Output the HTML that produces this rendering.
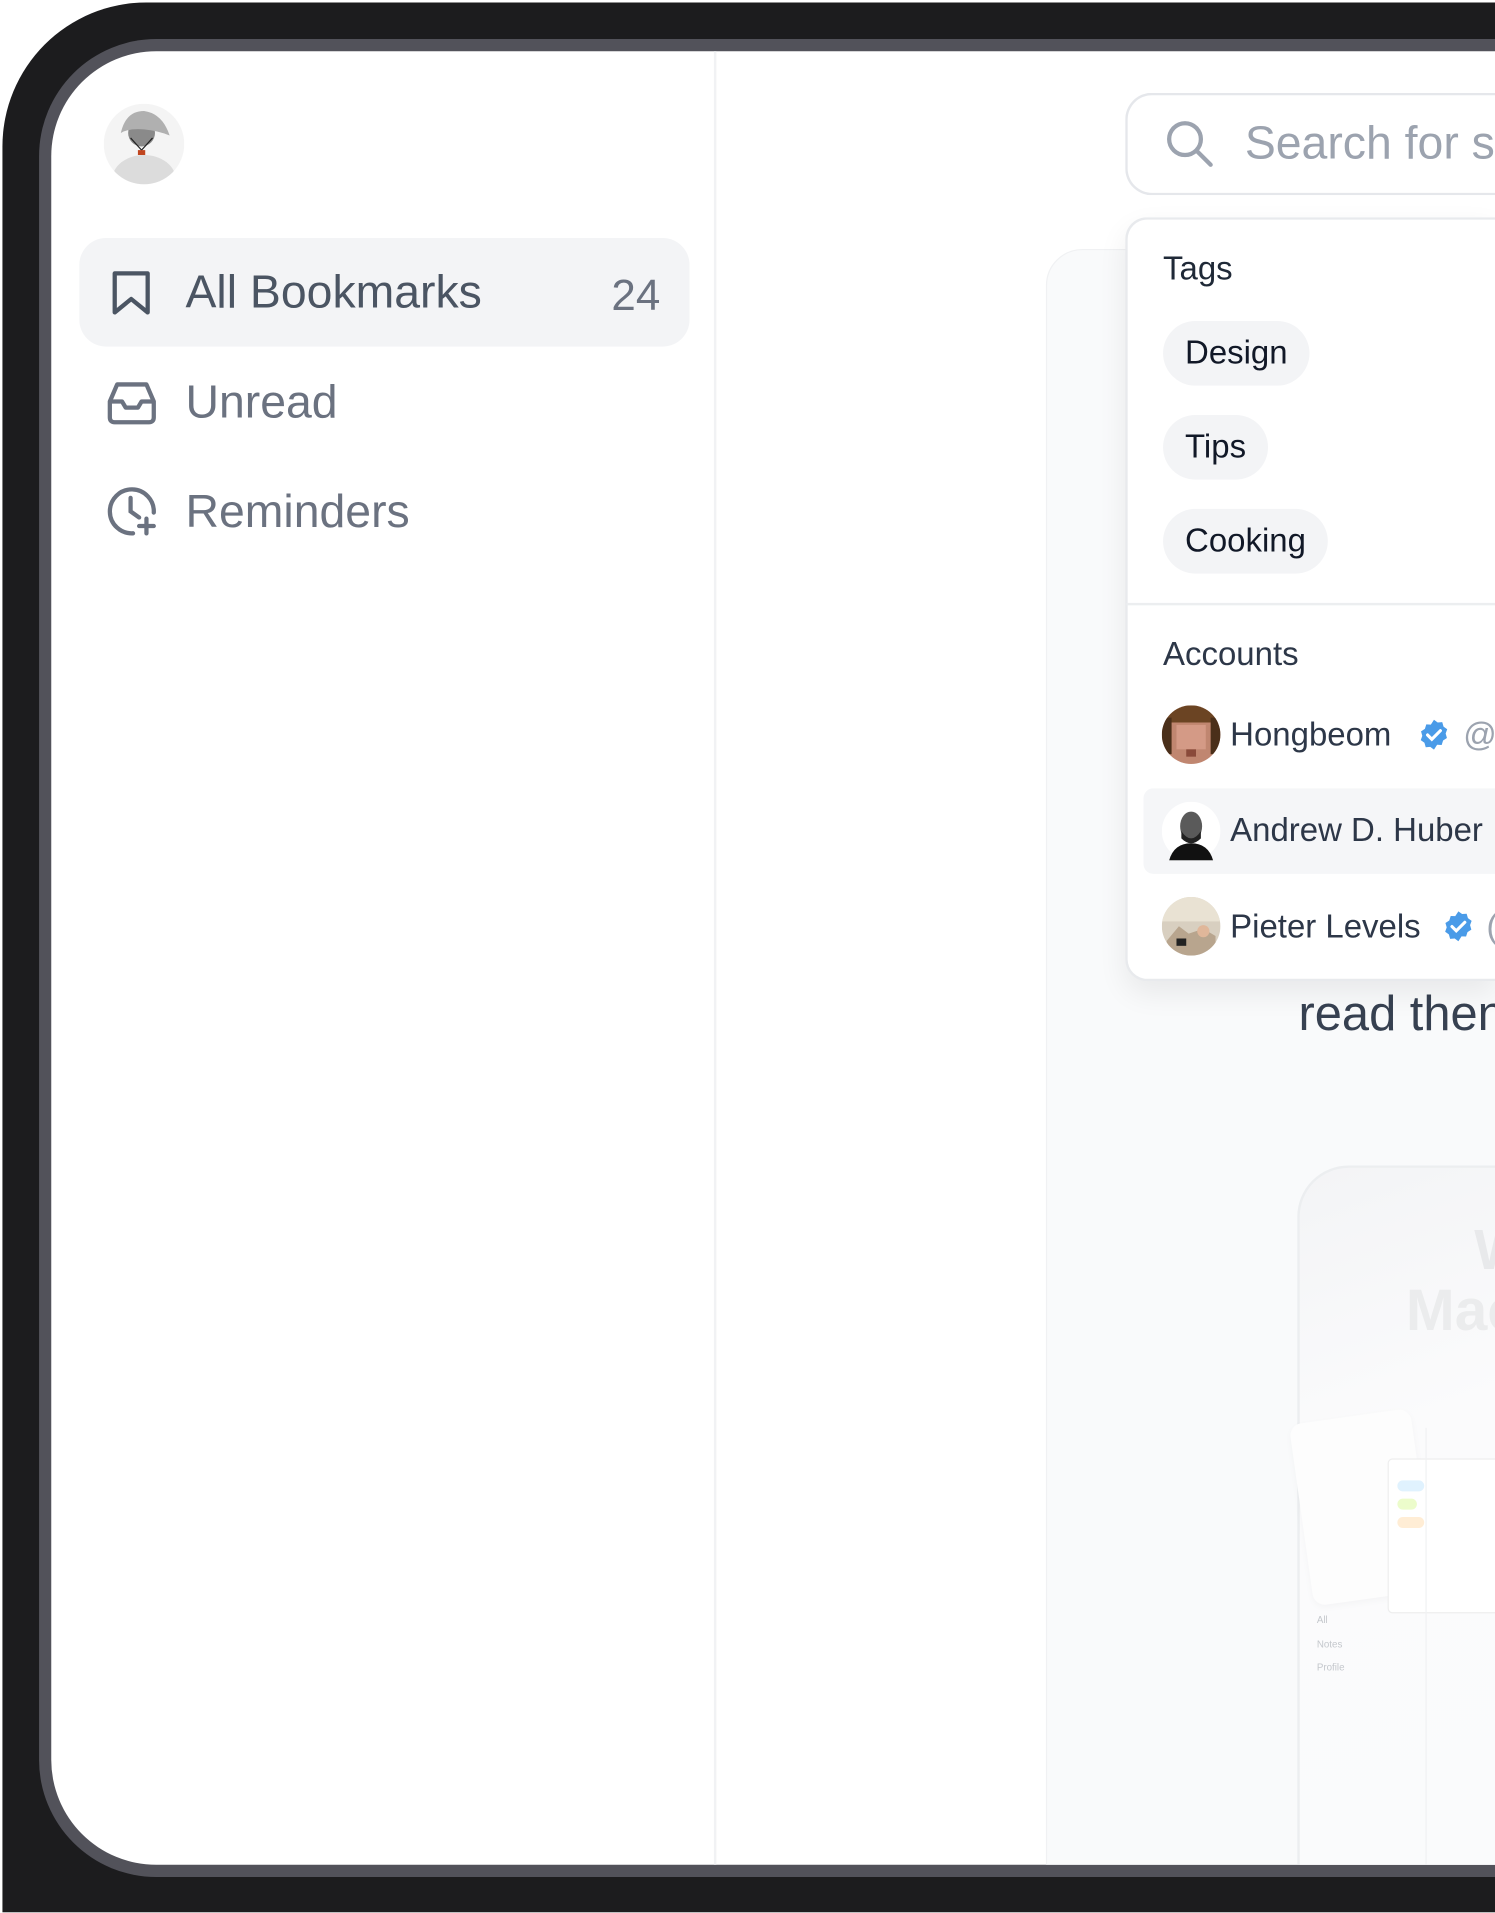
<!DOCTYPE html>
<html><head><meta charset="utf-8"><style>
html,body{margin:0;padding:0;width:1495px;height:1913px;overflow:hidden;background:#fff;font-family:"Liberation Sans",sans-serif}
#w{position:absolute;left:0;top:0;width:1225px;height:1567px;transform:scale(1.22041);transform-origin:0 0;overflow:hidden}
.a{position:absolute}
.pill{position:absolute;left:953px;height:53px;border-radius:27px;background:#f3f4f6;color:#111827;font-size:27px;line-height:53px;padding:0 18px;box-sizing:border-box}
.nm{position:absolute;left:1008px;font-size:27px;color:#2d3748;white-space:nowrap}
.badge{position:absolute;width:28px;height:28px}
</style></head><body><div id="w">
<div class="a" style="left:2px;top:2px;width:1223px;height:1565px;background:#1c1c1e;border-radius:118px 0 0 0"></div>
<div class="a" style="left:32px;top:32px;width:1193px;height:1506px;background:#52525a;border-radius:96px 0 0 96px"></div>
<div class="a" style="left:42px;top:42px;width:1183px;height:1486px;background:#fff;border-radius:86px 0 0 86px;overflow:hidden">
 <div class="a" style="left:815px;top:162px;width:500px;height:1400px;background:#f9fafb;border:1px solid #f0f1f3;border-radius:30px"></div>
 <div class="a" style="left:1022px;top:767px;font-size:40px;color:#374151;white-space:nowrap">read then</div>
 <div class="a" style="left:1021px;top:913px;width:300px;height:700px;border:2px solid #eceef0;border-radius:42px;background:linear-gradient(160deg,#f3f4f6 0%,#fbfbfc 30%,#fafbfc 100%)"></div>
 <div class="a" style="left:1166px;top:955px;font-size:46px;font-weight:bold;color:#e8e9eb">W</div>
 <div class="a" style="left:1110px;top:1005px;font-size:48px;font-weight:bold;color:#ebeced">Mac</div>
 <div class="a" style="left:1024px;top:1118px;width:100px;height:150px;background:#fdfdfd;transform:rotate(-8deg);border-radius:10px;box-shadow:0 2px 6px rgba(0,0,0,.03)"></div>
 <div class="a" style="left:1095px;top:1153px;width:100px;height:125px;background:#fff;border:1px solid #eee;border-radius:4px"></div>
 <div class="a" style="left:1103px;top:1171px;width:22px;height:9px;background:#e0f2fe;border-radius:5px"></div>
 <div class="a" style="left:1103px;top:1186px;width:16px;height:9px;background:#ecfccb;border-radius:5px"></div>
 <div class="a" style="left:1103px;top:1201px;width:22px;height:9px;background:#ffedd5;border-radius:5px"></div>
 <div class="a" style="left:1037px;top:1281px;font-size:8px;color:#c4c7cc">All</div>
 <div class="a" style="left:1037px;top:1301px;font-size:8px;color:#c4c7cc">Notes</div>
 <div class="a" style="left:1037px;top:1320px;font-size:8px;color:#c4c7cc">Profile</div>
 <div class="a" style="left:1126px;top:1128px;width:1px;height:358px;background:#f0f1f3"></div>
</div>
<div class="a" style="left:585px;top:42px;width:2px;height:1486px;background:#f1f2f4"></div>

<svg class="a" style="left:85px;top:85px" width="66" height="66" viewBox="0 0 66 66">
<defs><clipPath id="c0"><circle cx="33" cy="33" r="33"/></clipPath></defs>
<g clip-path="url(#c0)">
<rect width="66" height="66" fill="#f4f4f4"/>
<ellipse cx="33" cy="62" rx="26" ry="20" fill="#dcdcdc"/>
<circle cx="31" cy="24" r="11" fill="#8a8a8a"/>
<path d="M14 24 Q18 6 33 6 Q48 8 54 26 Q44 22 33 21 Q20 20 14 24Z" fill="#b0b0b0"/>
<path d="M22 28 L31 38 L40 28" stroke="#222" stroke-width="1" fill="none"/>
<rect x="28" y="38" width="6" height="4" fill="#c0451e"/>
</g>
</svg>

<div class="a" style="left:65px;top:195px;width:500px;height:89px;background:#f3f4f6;border-radius:22px"></div>
<svg class="a" style="left:90px;top:220px" width="36" height="40" viewBox="0 0 36 40" fill="none" stroke="#4b5563" stroke-width="3.5" stroke-linejoin="round"><path d="M4 4 H31 V36 L17.5 25 L4 36Z"/></svg>
<div class="a" style="left:152px;top:219px;font-size:38px;color:#4b5563">All Bookmarks</div>
<div class="a" style="left:501px;top:221px;font-size:36px;color:#6b7280">24</div>

<svg class="a" style="left:87px;top:311px" width="42" height="38" viewBox="0 0 42 38" fill="none" stroke="#6b7280" stroke-width="3.5" stroke-linejoin="round"><path d="M3 18 L9 4 H33 L39 18 V31 Q39 35 35 35 H7 Q3 35 3 31Z"/><path d="M3 18 H13 L16 23 H26 L29 18 H39"/></svg>
<div class="a" style="left:152px;top:309px;font-size:38px;color:#6b7280">Unread</div>

<svg class="a" style="left:87px;top:397px" width="44" height="44" viewBox="0 0 44 44" fill="none" stroke="#6b7280" stroke-width="3.5" stroke-linecap="round"><path d="M22 40 A18 18 0 1 1 39 23"/><path d="M20 11 V22 L27 27"/><path d="M33 28 V40 M27 34 H39"/></svg>
<div class="a" style="left:152px;top:399px;font-size:38px;color:#6b7280">Reminders</div>

<div class="a" style="left:922px;top:76px;width:303px;height:84px;box-sizing:border-box;border:2px solid #e5e7eb;border-right:none;border-radius:22px 0 0 22px;background:#fff"></div>
<svg class="a" style="left:955px;top:98px" width="40" height="40" viewBox="0 0 40 40" fill="none" stroke="#9ca3af" stroke-width="3.5" stroke-linecap="round"><circle cx="16" cy="16" r="13"/><path d="M26 26 L37 37"/></svg>
<div class="a" style="left:1020px;top:97px;font-size:38px;color:#9ca3af;white-space:nowrap">Search for s</div>

<div class="a" style="left:922px;top:178px;width:303px;height:626px;box-sizing:border-box;border:2px solid #e8eaed;border-right:none;border-radius:18px 0 0 18px;background:#fff;box-shadow:0 10px 24px rgba(0,0,0,.07)"></div>
<div class="a" style="left:953px;top:205px;font-size:27px;color:#1f2937">Tags</div>
<div class="pill" style="top:263px">Design</div>
<div class="pill" style="top:340px">Tips</div>
<div class="pill" style="top:417px">Cooking</div>
<div class="a" style="left:923px;top:494px;width:302px;height:2px;background:#eceef0"></div>
<div class="a" style="left:953px;top:521px;font-size:27px;color:#2d3748">Accounts</div>

<svg class="a" style="left:952px;top:578px" width="48" height="48" viewBox="0 0 48 48"><defs><clipPath id="c1"><circle cx="24" cy="24" r="24"/></clipPath></defs><g clip-path="url(#c1)"><rect width="48" height="48" fill="#c08670"/><rect width="48" height="14" fill="#6b4423"/><rect x="0" y="10" width="8" height="30" fill="#4a2f1a"/><rect x="40" y="10" width="8" height="30" fill="#4a2f1a"/><rect x="12" y="16" width="24" height="20" fill="#d49a86"/><rect x="20" y="36" width="8" height="6" fill="#8a4a3a"/></g></svg>
<div class="nm" style="top:587px">Hongbeom</div>
<svg class="badge" style="left:1161px;top:588px" viewBox="0 0 24 24"><path d="M12 1.5l2.6 1.9 3.2-.2.9 3.1 2.6 1.9-1.1 3 .9 3.1-2.7 1.8-1 3.1-3.2-.1L12 22.5l-2.6-1.9-3.2.2-.9-3.1-2.6-1.9 1.1-3-.9-3.1 2.7-1.8 1-3.1 3.2.1z" fill="#4a9be8"/><path d="M7.5 12.2l3 3 6-6" stroke="#fff" stroke-width="2.2" fill="none" stroke-linecap="round"/></svg>
<div class="a" style="left:1199px;top:587px;font-size:27px;color:#9ca3af">@</div>

<div class="a" style="left:937px;top:646px;width:288px;height:70px;background:#f5f6f8;border-radius:8px 0 0 8px"></div>
<svg class="a" style="left:952px;top:657px" width="48" height="48" viewBox="0 0 48 48"><circle cx="24" cy="24" r="24" fill="#fff"/><ellipse cx="24" cy="20" rx="9" ry="12" fill="#5a5a5a"/><path d="M6 48 Q10 34 24 34 Q38 34 42 48Z" fill="#111"/><path d="M16 24 Q24 36 32 24 L32 30 Q24 38 16 30Z" fill="#222"/></svg>
<div class="nm" style="top:665px">Andrew D. Huber</div>

<svg class="a" style="left:952px;top:735px" width="48" height="48" viewBox="0 0 48 48"><defs><clipPath id="c3"><circle cx="24" cy="24" r="24"/></clipPath></defs><g clip-path="url(#c3)"><rect width="48" height="48" fill="#d8cfc0"/><rect x="0" y="0" width="48" height="20" fill="#e9e2d3"/><path d="M4 36 L14 24 L22 30 L34 26 L44 32 L44 48 L4 48Z" fill="#b8a58e"/><rect x="12" y="34" width="8" height="6" fill="#222"/><circle cx="34" cy="28" r="5" fill="#e0b79a"/></g></svg>
<div class="nm" style="top:744px">Pieter Levels</div>
<svg class="badge" style="left:1181px;top:745px" viewBox="0 0 24 24"><path d="M12 1.5l2.6 1.9 3.2-.2.9 3.1 2.6 1.9-1.1 3 .9 3.1-2.7 1.8-1 3.1-3.2-.1L12 22.5l-2.6-1.9-3.2.2-.9-3.1-2.6-1.9 1.1-3-.9-3.1 2.7-1.8 1-3.1 3.2.1z" fill="#4a9be8"/><path d="M7.5 12.2l3 3 6-6" stroke="#fff" stroke-width="2.2" fill="none" stroke-linecap="round"/></svg>
<div class="a" style="left:1218px;top:744px;font-size:27px;color:#9ca3af">(</div>
</div></body></html>
